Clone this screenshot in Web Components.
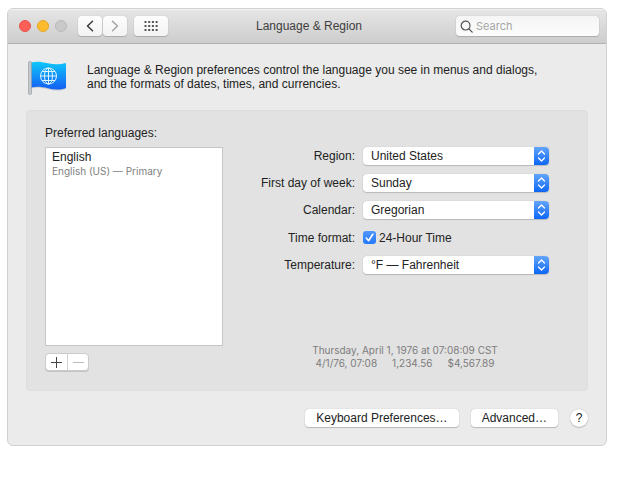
<!DOCTYPE html>
<html lang="en">
<head>
<meta charset="utf-8">
<title>Language &amp; Region</title>
<style>
  body { margin: 0; padding: 8px 11px 8px 7px; background: #fff; color: #222; font: 12px/14px "Liberation Sans", Arial, sans-serif; --small-font: Inter, "Liberation Sans", sans-serif; }
</style>
</head>
<body>
<prefs-window>
  <title-bar slot="bar">Language &amp; Region</title-bar>
  <intro-banner>Language &amp; Region preferences control the language you see in menus and dialogs,<br>and the formats of dates, times, and currencies.</intro-banner>
  <prefs-panel>
    <language-list slot="side" heading="Preferred languages:">
      <language-item name="English">English (US) — Primary</language-item>
    </language-list>
    <popup-row label="Region:" value="United States"></popup-row>
    <popup-row label="First day of week:" value="Sunday"></popup-row>
    <popup-row label="Calendar:" value="Gregorian"></popup-row>
    <check-row label="Time format:" text="24-Hour Time"></check-row>
    <popup-row label="Temperature:" value="°F — Fahrenheit"></popup-row>
    <format-sample slot="sample"></format-sample>
  </prefs-panel>
  <window-footer>
    <push-button>Keyboard Preferences…</push-button>
    <push-button>Advanced…</push-button>
    <push-button round>?</push-button>
  </window-footer>
</prefs-window>

<script>
const define = (name, html, setup) => {
  const template = document.createElement('template');
  template.innerHTML = '<style>*{box-sizing:border-box}button,input,select{font:inherit;color:inherit;margin:0}</style>' + html;
  customElements.define(name, class extends HTMLElement {
    connectedCallback() {
      if (this.shadowRoot) return;
      const root = this.attachShadow({ mode: 'open' });
      root.append(template.content.cloneNode(true));
      if (setup) setup(this, root);
    }
  });
};

define('prefs-window', `
  <style>
    :host { display: block; border: 1px solid #d2d2d2; border-radius: 6px; background: #ebebeb; overflow: hidden; }
    main { padding: 0 18px 18px; }
  </style>
  <slot name="bar"></slot><main><slot></slot></main>`);

define('title-bar', `
  <style>
    :host { display: grid; grid-template-columns: 1fr auto 1fr; align-items: center; height: 34px; padding: 0 7px 0 11px;
      background: linear-gradient(#e6e6e6, #cdcdcd); border-bottom: 1px solid #b1b1b1; box-shadow: inset 0 1px #f2f2f2; }
    .left, .lights, .nav { display: flex; align-items: center; }
    .lights { gap: 6px; margin-right: 11px; }
    .lights button { width: 12px; height: 12px; padding: 0; border: 1px solid #b9b9b9; border-radius: 50%; background: #c9c9c9; }
    .lights .close { background: #fc5f57; border-color: #e8544c; }
    .lights .min { background: #fdbc2e; border-color: #e6a724; }
    .nav { gap: 1px; margin-right: 7px; }
    .tool { display: grid; place-items: center; width: 24px; height: 20px; padding: 0; border: 0; border-radius: 4px;
      background: linear-gradient(#fdfdfd, #f3f3f3); box-shadow: 0 0 1px #aaa, 0 1px 1px #aaa; }
    .wide { width: 34px; }
    svg { display: block; fill: none; }
    h1 { margin: 0; font: inherit; color: #404040; }
    .search { justify-self: end; display: flex; align-items: center; gap: 3px; width: 143px; height: 20px; padding: 0 4px; border-radius: 4px;
      background: linear-gradient(#f5f5f5, #fcfcfc); box-shadow: 0 0 1px #aaa, 0 1px 1px #aaa; }
    input { flex: 1; min-width: 0; padding: 0; border: 0; background: none; outline: 0; font-family: var(--small-font); font-size: 11px; }
    input::placeholder { color: #a6a6a6; opacity: 1; }
  </style>
  <div class="left">
    <div class="lights"><button class="close" aria-label="Close"></button><button class="min" aria-label="Minimize"></button><button aria-label="Zoom" disabled></button></div>
    <div class="nav">
      <button class="tool" aria-label="Back"><svg width="8" height="12" stroke="#3c3c3c" stroke-width="1.5" stroke-linecap="round" stroke-linejoin="round"><path d="M6.5 1.2 1.5 6l5 4.8"/></svg></button>
      <button class="tool" aria-label="Forward"><svg width="8" height="12" stroke="#a4a4a4" stroke-width="1.5" stroke-linecap="round" stroke-linejoin="round"><path d="M1.5 1.2 6.5 6l-5 4.8"/></svg></button>
    </div>
    <button class="tool wide" aria-label="Show All"><svg width="14" height="10" stroke="#555" stroke-width="2"><path d="M.5 1h13.200M.5 5h13.200M.5 9h13.200" stroke-dasharray="2 1.700"/></svg></button>
  </div>
  <h1><slot></slot></h1>
  <label class="search"><svg width="13" height="13" stroke="#555" stroke-width="1.2" stroke-linecap="round"><circle cx="5.6" cy="5.6" r="4.4"/><path d="m9 9 3.2 3.2"/></svg><input type="search" placeholder="Search" aria-label="Search"></label>`);

define('intro-banner', `
  <style>
    :host { display: flex; align-items: flex-start; gap: 19px; padding: 15px 0 12px 2px; color: #222; }
    p { margin: 0; padding-top: 4px; }
    svg { display: block; flex: none; }
  </style>
  <svg width="40" height="39" viewBox="0 0 40 39" aria-hidden="true">
    <defs><linearGradient id="sky" x1="0" y1="0" x2="0" y2="1"><stop stop-color="#0fc8fa"/><stop offset="1" stop-color="#145df3"/></linearGradient></defs>
    <path d="M3 4.500c6-1.500 11-.5 17 .8 6 1.300 12 1.300 18-.3v25c-6 2.200-12 1.800-18 .3-6-1.400-11-2-17-.8z" fill="#9aa5b0" opacity=".45"/>
    <path d="M3 3.500c6-1.500 11-.5 17 .8 6 1.300 12 1.300 18-.3v25c-6 2.200-12 1.800-18 .3-6-1.400-11-2-17-.8z" fill="url(#sky)"/>
    <rect x=".5" y="2.500" width="3" height="33" rx="1" fill="#c4c9cd" stroke="#8f979d" stroke-width=".6"/>
    <g fill="none" stroke="#dff5ff" stroke-width="1"><circle cx="20.500" cy="17" r="8"/><ellipse cx="20.500" cy="17" rx="4" ry="8"/><path d="M20.500 9v16M12.500 17h16M14 12.500h13M14 21.500h13"/></g>
  </svg>
  <p><slot></slot></p>`);

define('prefs-panel', `
  <style>
    :host { display: grid; grid-template-columns: 178px minmax(0, 1fr); padding: 15px 0 19px 18px; border: 1px solid #dedede; border-radius: 4px; background: #e2e2e2; }
    .main { display: flex; flex-direction: column; justify-content: space-between; }
    form { display: grid; gap: 9px; padding: 21px 38px 0 0; }
  </style>
  <slot name="side"></slot>
  <div class="main"><form><slot></slot></form><slot name="sample"></slot></div>`);

define('language-list', `
  <style>
    :host { display: block; }
    h2 { margin: 0 0 7px; font: inherit; }
    .list { height: 199px; padding: 2px 6px; border: 1px solid #c6c6c6; background: #fff; }
    .tools { display: inline-flex; margin-top: 7px; border: 1px solid #cbcbcb; border-radius: 4px; background: #fff; box-shadow: 0 1px #c4c4c4; vertical-align: top; }
    button { display: grid; place-items: center; width: 21px; height: 16px; padding: 0; border: 0; background: none; }
    button + button { border-left: 1px solid #d4d4d4; }
    svg { display: block; }
  </style>
  <h2></h2><div class="list" role="list"><slot></slot></div>
  <div class="tools">
    <button aria-label="Add"><svg width="11" height="11" stroke="#444"><path d="M5.500 0v11M0 5.500h11"/></svg></button>
    <button aria-label="Remove" disabled><svg width="11" height="11" stroke="#bbb"><path d="M0 5.500h11"/></svg></button>
  </div>`, (el, root) => { root.querySelector('h2').textContent = el.getAttribute('heading'); });

define('language-item', `
  <style>
    :host { display: block; }
    small { display: block; font-family: var(--small-font); font-size: 10px; color: #808080; }
  </style>
  <span></span><small><slot></slot></small>`, (el, root) => {
    el.setAttribute('role', 'listitem');
    root.querySelector('span').textContent = el.getAttribute('name');
  });

const rowStyle = `:host { display: grid; grid-template-columns: 1fr 186px; gap: 8px; align-items: center; height: 18px; }
  .name { text-align: right; }`;

define('popup-row', `
  <style>${rowStyle}
    .popup { display: grid; grid-template-columns: 1fr 15px; height: 18px; border-radius: 4px; background: #fff; box-shadow: 0 0 1px #aaa, 0 1px 1px #bbb; }
    select { grid-area: 1 / 1 / 2 / 3; min-width: 0; appearance: none; padding: 0 20px 0 8px; border: 0; background: none; outline: 0; }
    .knob { grid-area: 1 / 2; display: grid; place-items: center; border-radius: 0 4px 4px 0; background: linear-gradient(#64a5fb, #0c66f5); pointer-events: none; }
    svg { display: block; fill: none; }
  </style>
  <label class="name" for="choice"></label>
  <div class="popup"><select id="choice"><option></option></select>
    <span class="knob"><svg width="9" height="12" stroke="#fff" stroke-width="1.300" stroke-linecap="round" stroke-linejoin="round"><path d="m1.500 4 3-3 3 3M1.500 8l3 3 3-3"/></svg></span></div>`,
  (el, root) => {
    root.querySelector('label').textContent = el.getAttribute('label');
    root.querySelector('option').textContent = el.getAttribute('value');
  });

define('check-row', `
  <style>${rowStyle}
    :host { height: 19px; }
    .check { display: flex; align-items: center; gap: 3px; }
    .box { display: grid; width: 13px; height: 13px; }
    input, svg { grid-area: 1 / 1; width: 13px; height: 13px; }
    input { appearance: none; border-radius: 3px; background: #d0d0d0; }
    input:checked { background: linear-gradient(#4f97fb, #2478fa); }
    svg { z-index: 1; pointer-events: none; fill: none; }
  </style>
  <span class="name"></span>
  <label class="check"><span class="box"><input type="checkbox" checked><svg viewBox="0 0 12 12" stroke="#fff" stroke-width="1.500" stroke-linecap="round" stroke-linejoin="round"><path d="m3 6.500 2.200 2.500L9 3"/></svg></span><span class="text"></span></label>`,
  (el, root) => {
    root.querySelector('.name').textContent = el.getAttribute('label');
    root.querySelector('.text').textContent = el.getAttribute('text');
  });

define('format-sample', `
  <style>
    :host { display: block; padding-bottom: 1px; text-align: center; font-family: var(--small-font); font-size: 10px; line-height: 13px; color: #7c7c7c; }
    .row { display: flex; justify-content: center; gap: 15px; }
  </style>
  <div>Thursday, April 1, 1976 at 07:08:09 CST</div>
  <div class="row"><span>4/1/76, 07:08</span><span>1,234.56</span><span>$4,567.89</span></div>`);

define('window-footer', `
  <style>:host { display: flex; justify-content: flex-end; align-items: center; gap: 12px; padding-top: 18px; }</style>
  <slot></slot>`);

define('push-button', `
  <style>
    :host { display: block; }
    button { display: block; height: 18px; padding: 0 11px; border: 0; border-radius: 4px; background: #fff; box-shadow: 0 0 1px #aaa, 0 1px 1px #bbb; }
    :host([round]) button { width: 18px; padding: 0; border-radius: 50%; }
  </style>
  <button type="button"><slot></slot></button>`);
</script>
</body>
</html>
